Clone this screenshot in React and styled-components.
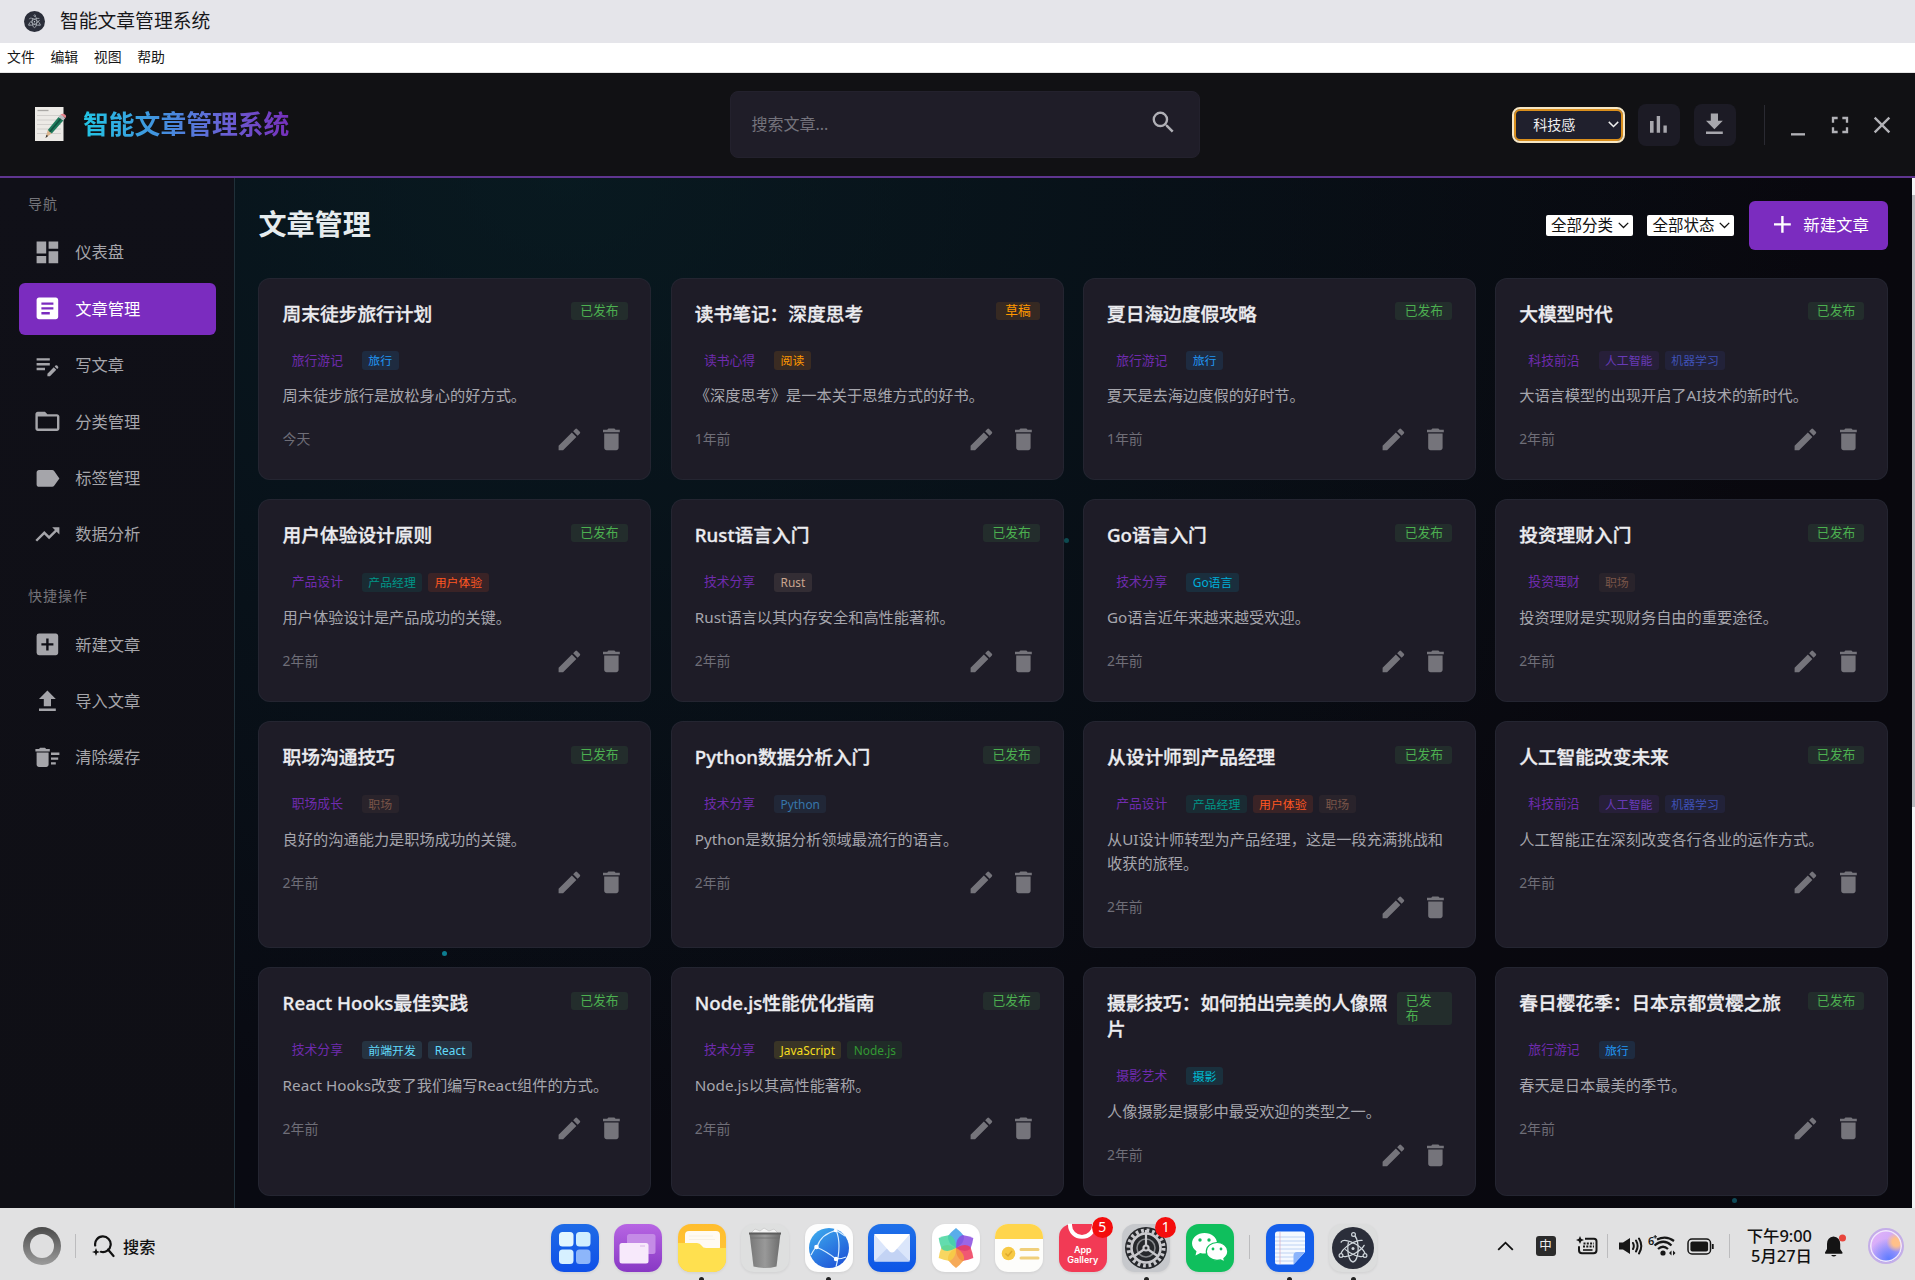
import React from "react";
import styled, { createGlobalStyle, css } from "styled-components";
import {
  MdDashboard,
  MdArticle,
  MdEditNote,
  MdFolderOpen,
  MdLabel,
  MdTrendingUp,
  MdAddBox,
  MdUpload,
  MdDeleteSweep,
  MdSearch,
  MdFileDownload,
  MdMinimize,
  MdFullscreen,
  MdClose,
  MdAdd,
  MdEdit,
  MdDelete,
} from "react-icons/md";

const GlobalStyle = createGlobalStyle`
  * { box-sizing: border-box; }
  body {
    margin: 0;
    overflow: hidden;
    font-family: "Noto Sans", "Noto Sans CJK SC", sans-serif;
    font-size: 16px;
  }
  h1, h2, h3, p { margin: 0; }
  button { font-family: inherit; border: 0; padding: 0; background: none; color: inherit; }
  svg { display: block; flex: none; }
`;

const Desktop = styled.div`
  width: 1915px;
  height: 1280px;
  display: flex;
  flex-direction: column;
  background: #0b0b10;
`;

/* ---------- window chrome ---------- */

const TitleBar = styled.div`
  flex: none;
  height: 43px;
  display: flex;
  align-items: center;
  gap: 15px;
  padding: 0 0 1px 24px;
  background: #e5e5ea;
  color: #17171a;
  font-size: 18.8px;
  span { margin-bottom: 2px; }
`;

const MenuBar = styled.div`
  flex: none;
  height: 30px;
  display: flex;
  align-items: center;
  gap: 15.6px;
  padding: 0 0 3px 7px;
  background: #fff;
  border-bottom: 1px solid #e6e6e6;
  color: #161616;
  font-size: 13.9px;
`;

const Header = styled.header`
  flex: none;
  height: 105px;
  display: grid;
  grid-template-columns: 730px 470px 1fr;
  align-items: center;
  background: #111114;
  border-bottom: 2px solid #5f3590;
`;

const Brand = styled.div`
  display: flex;
  align-items: center;
  gap: 16.5px;
  padding: 0 0 2px 32.5px;
`;

const BrandName = styled.h1`
  font-size: 25.8px;
  font-weight: 700;
  line-height: 38px;
  background: linear-gradient(90deg, #22c5e4 0%, #4a86dd 45%, #6a5fd4 70%, #7630bb 100%);
  -webkit-background-clip: text;
  background-clip: text;
  color: transparent;
`;

const SearchBox = styled.div`
  height: 67px;
  margin-bottom: 1px;
  display: flex;
  align-items: center;
  justify-content: space-between;
  padding: 0 21px 0 20.5px;
  border: 1px solid #23212d;
  border-radius: 8px;
  background: #1f1d28;
  color: #74737c;
  font-size: 16px;
  span { margin-bottom: 2px; }
  svg { color: #b0b0b6; margin-bottom: 3px; }
`;

const HeaderTools = styled.div`
  display: flex;
  align-items: center;
  justify-content: flex-end;
  padding: 0 19px 0 0;
`;

const ThemeSelect = styled.button`
  width: 113px;
  height: 36px;
  margin-right: -1px;
  display: flex;
  align-items: center;
  justify-content: space-between;
  padding: 0 4px 0 19.5px;
  border: 2px solid #f7e7c4;
  border-radius: 8px;
  box-shadow: inset 0 0 0 2px #d98e1c;
  background: #20202d;
  color: #eeeeee;
  font-size: 14.1px;
  span { margin-bottom: 2px; }
`;

const ToolButton = styled.button`
  width: 42px;
  height: 42px;
  margin-left: 14px;
  display: grid;
  place-items: center;
  border-radius: 8px;
  background: #1c1b25;
  color: #a7a7ad;
`;

const ToolDivider = styled.i`
  width: 1px;
  height: 40px;
  margin: 0 19px 0 28px;
  background: #2a2a32;
`;

const WindowButton = styled.button`
  width: 28px;
  margin-left: ${(p) => (p.$first ? 0 : 14.2)}px;
  color: #b2b2b7;
`;

/* ---------- layout ---------- */

const Body = styled.div`
  flex: none;
  height: 1030px;
  display: flex;
  overflow: hidden;
`;

const Sidebar = styled.nav`
  flex: none;
  width: 235px;
  padding: 16px 18px 0 18.6px;
  border-right: 1px solid #203039;
  background: linear-gradient(180deg, #101018 0, #0f0f15 100%);
`;

const SectionTitle = styled.h2`
  height: 20px;
  margin: ${(p) => (p.$spaced ? "25.5px" : "0")} 0 13px;
  padding-left: 9.4px;
  font-size: 14px;
  font-weight: 400;
  line-height: 20px;
  letter-spacing: 1px;
  color: #74747a;
`;

const NavItem = styled.a`
  height: 51.8px;
  margin-bottom: 4.6px;
  display: flex;
  align-items: center;
  gap: 13.4px;
  padding: 0 0 1px 14.4px;
  border-radius: 6px;
  font-size: 16.3px;
  color: #a5a5aa;
  span { margin-bottom: 2px; }
  ${(p) =>
    p.$active &&
    css`
      background: #7b2cbf;
      color: #fff;
    `}
`;

const Main = styled.main`
  position: relative;
  flex: 1;
  padding: 23px 24px 0 23.4px;
  background:
    radial-gradient(1250px 950px at 330px 0px, rgba(8, 36, 42, 0.6) 0%, rgba(6, 32, 40, 0.36) 45%, rgba(6, 20, 30, 0) 100%),
    linear-gradient(90deg, #090a12, #09080e);
`;

const ScrollTrack = styled.div`
  flex: none;
  width: 3px;
  padding-top: 17px;
  background: #f3f3f5;
`;

const ScrollThumb = styled.div`
  height: 612px;
  background: #bcbcc0;
`;

const Particle = styled.i`
  position: absolute;
  left: ${(p) => p.$x}px;
  top: ${(p) => p.$y}px;
  width: 5px;
  height: 5px;
  border-radius: 50%;
  background: ${(p) => p.$color};
`;

const PageHead = styled.div`
  height: 48.5px;
  margin-bottom: 28.2px;
  display: flex;
  align-items: center;
`;

const PageTitle = styled.h2`
  flex: 1;
  margin-bottom: 2.5px;
  font-size: 28.1px;
  font-weight: 700;
  line-height: 40px;
  color: #e6ecee;
`;

const FilterSelect = styled.button`
  width: 87px;
  height: 21px;
  margin-right: 14.5px;
  display: flex;
  align-items: center;
  justify-content: space-between;
  padding: 0 4px 1px 5.5px;
  border-radius: 2px;
  background: #fff;
  color: #111;
  font-size: 15.5px;
  line-height: 20px;
  svg { margin-top: 2px; }
`;

const NewButton = styled.button`
  width: 139.5px;
  height: 48.5px;
  display: flex;
  align-items: center;
  gap: 7px;
  padding: 0 0 1px 19px;
  border-radius: 6px;
  background: #7b2cbf;
  color: #fff;
  font-size: 16.4px;
  span { margin-bottom: 2px; }
`;

const CardGrid = styled.section`
  display: grid;
  grid-template-columns: repeat(4, 1fr);
  gap: 19.2px;
`;

const Card = styled.article`
  padding: 22px 22.6px 23.6px 23.2px;
  border: 1px solid rgba(60, 75, 90, 0.2);
  border-radius: 12px;
  background: #1e1c27;
`;

const CardHead = styled.div`
  display: flex;
  align-items: flex-start;
  justify-content: space-between;
  margin-bottom: 24.2px;
`;

const CardTitle = styled.h3`
  font-size: 18.72px;
  font-weight: 500;
  line-height: 26.2px;
  color: #ececf0;
  -webkit-text-stroke: 0.3px #ececf0;
`;

const Status = styled.span`
  margin-top: 1.5px;
  padding: 1px 9.2px 2px;
  border-radius: 3px;
  font-size: 12.8px;
  line-height: 15px;
  color: ${(p) => (p.$draft ? "#ff9800" : "#4caf50")};
  background: ${(p) => (p.$draft ? "rgba(255,152,0,.11)" : "rgba(76,175,80,.12)")};
`;

const TagRow = styled.div`
  display: flex;
  align-items: center;
  height: 18.7px;
  gap: 6px;
  margin-bottom: 13.6px;
`;

const Category = styled.span`
  margin: 0 3.4px 1.6px 0;
  padding: 0 9.6px 0 9.2px;
  font-size: 12.8px;
  line-height: 18px;
  color: #6f2bae;
`;

const Tag = styled.span`
  height: 18.7px;
  padding: 0 6.4px;
  border-radius: 3px;
  font-size: 11.9px;
  line-height: 18px;
  color: ${(p) => p.$color};
  background: ${(p) => p.$color}20;
`;

const Summary = styled.p`
  margin-bottom: 15.2px;
  font-size: 15.22px;
  line-height: 24.3px;
  color: #a6a6ad;
`;

const CardFoot = styled.div`
  height: 32.8px;
  display: flex;
  align-items: center;
  justify-content: space-between;
  font-size: 13.9px;
  color: #6f6e78;
  time { margin-bottom: 2px; }
`;

const CardActions = styled.div`
  display: flex;
  gap: 9.6px;
  color: #75747b;
`;

const IconButton = styled.button`
  width: 32.8px;
  height: 32.8px;
  display: grid;
  place-items: center;
`;

/* ---------- taskbar ---------- */

const Taskbar = styled.footer`
  flex: none;
  height: 72px;
  display: grid;
  grid-template-columns: 550.8px 826px 1fr;
  align-items: stretch;
  background: #e1e1e2;
  color: #111;
`;

const TaskLeft = styled.div`
  display: flex;
  align-items: center;
  padding: 4px 0 0 23px;
  font-size: 16.2px;
  font-weight: 500;
`;

const Launcher = styled.div`
  width: 38px;
  height: 38px;
  border-radius: 50%;
  border: 7px solid transparent;
  background:
    linear-gradient(#dfdfe0, #dfdfe0) padding-box,
    linear-gradient(180deg, #4a4a4a, #9c9c9c) border-box;
`;

const TaskSearch = styled.div`
  display: flex;
  align-items: center;
  gap: 8px;
`;

const Separator = styled.i`
  flex: none;
  width: 1px;
  height: 24px;
  margin: ${(p) => p.$m};
  background: #bcbcbe;
`;

const Dock = styled.div`
  display: flex;
  gap: 15.5px;
  padding-top: 15.7px;
`;

const DockSlot = styled.div`
  position: relative;
  width: 48px;
  height: 48px;
`;

const Tile = styled.div`
  width: 48px;
  height: 48px;
  overflow: hidden;
  border-radius: 13px;
  background: ${(p) => p.$bg};
  box-shadow: 0 1px 3px rgba(0, 0, 0, 0.08);
`;

const Badge = styled.b`
  position: absolute;
  top: -7px;
  right: -6px;
  width: 21px;
  height: 21px;
  border-radius: 50%;
  background: #f40d0d;
  color: #fff;
  font-size: 14px;
  font-weight: 400;
  line-height: 20px;
  text-align: center;
`;

const RunningDot = styled.i`
  position: absolute;
  left: 21.5px;
  top: 53px;
  width: 5px;
  height: 5px;
  border-radius: 50%;
  background: #222;
`;

const StoreTile = styled.div`
  padding-top: 21px;
  font-family: Inter, "Noto Sans", sans-serif;
  font-size: 9px;
  font-weight: 600;
  line-height: 10px;
  text-align: center;
  color: #fff;
`;

const StoreHandle = styled.i`
  position: absolute;
  left: 9px;
  top: -13px;
  width: 28px;
  height: 28px;
  border: 4px solid #fff;
  border-radius: 50%;
  clip-path: inset(13px 0 0 0);
`;

const Tray = styled.div`
  display: flex;
  align-items: center;
  justify-content: flex-end;
  padding: 4px 11px 0 0;
`;

const InputMode = styled.div`
  width: 20px;
  height: 20px;
  margin: 0 20px 0 22px;
  border-radius: 3px;
  background: #2b2b2b;
  color: #eee;
  font-size: 12.5px;
  line-height: 19px;
  text-align: center;
`;

const StatusIcons = styled.div`
  display: flex;
  align-items: center;
  gap: 5px;
  svg:last-child { margin-left: 6px; }
`;

const Clock = styled.div`
  margin-right: 12px;
  font-size: 16.4px;
  font-weight: 500;
  line-height: 20px;
  text-align: right;
`;

const Orb = styled.div`
  width: 36px;
  height: 36px;
  margin-left: 21px;
  border: 2px solid #c4aee8;
  border-radius: 50%;
  box-shadow: inset 0 0 0 1.5px #f1e9fb;
  background:
    radial-gradient(circle at 82% 38%, #ffc08a 0 12%, rgba(255, 190, 150, 0) 30%),
    radial-gradient(circle at 58% 90%, #5f7cff 0, rgba(100, 130, 255, 0) 60%),
    linear-gradient(135deg, #e6b4f8, #b7a0fb);
`;

/* ---------- drawings ---------- */

const ElectronLogo = ({ size, fill = "#2b2e3a", inset = 0 }) => (
  <svg width={size} height={size} viewBox="0 0 48 48">
    <circle cx="24" cy="24" r={24 - inset} fill={fill} />
    <g fill="none" stroke="#cfd6dc" strokeWidth="1.300" strokeLinecap="round">
      <ellipse cx="24" cy="24.500" rx="13.500" ry="5.200" transform="rotate(-30 24 24.500)" strokeDasharray="54 9" strokeDashoffset="-4" />
      <ellipse cx="24" cy="24.500" rx="13.500" ry="5.200" transform="rotate(30 24 24.500)" strokeDasharray="54 9" strokeDashoffset="-30" />
      <ellipse cx="24" cy="24.500" rx="13.500" ry="5.200" transform="rotate(90 24 24.500)" strokeDasharray="54 9" strokeDashoffset="-30" />
    </g>
    <g fill={fill} stroke="#cfd6dc" strokeWidth="1.200">
      <circle cx="24.500" cy="10.500" r="1.900" />
      <circle cx="12" cy="31.500" r="1.900" />
      <circle cx="36" cy="31.500" r="1.900" />
    </g>
    <circle cx="24" cy="24.500" r="1.500" fill="#cfd6dc" />
  </svg>
);

const MemoLogo = () => (
  <svg width="34" height="38" viewBox="0 0 34 38">
    <path d="M2 2h28.500v34H2z" fill="#eceae6" />
    <path d="M4.500 5.500h11" stroke="#aaa8a5" strokeWidth="1.300" />
    <path d="M4 10.500h24M4 15h24M4 19.500h24M4 24h24M4 28.500h24" stroke="#cfcdca" strokeWidth=".9" />
    <path d="M12.500 33l2.300-8 4 3.300z" fill="#d9b48c" />
    <path d="M12.500 33l1-3.300 1.600 1.300z" fill="#333" />
    <path d="M14.800 25L25.500 12l4.800 3.500-11.500 12.900z" fill="#1f7a5c" />
    <path d="M16.800 26.700L28 13.600" stroke="#115140" strokeWidth="1.600" />
    <path d="M25.500 12l2-2.400 4.900 3.500-2.100 2.400z" fill="#b9bcc0" />
    <path d="M27.500 9.600q2.400-1.800 4.500-.1 2 1.500.4 3.600z" fill="#e5838c" />
  </svg>
);

const BarsIcon = ({ size }) => (
  <svg width={size} height={size} viewBox="0 0 24 24" fill="currentColor">
    <path d="M5 9.200h3V19H5zM10.600 5h2.800v14h-2.800zM16.200 13H19v6h-2.800z" />
  </svg>
);

const Chevron = ({ w, up, weight = 1.6 }) => (
  <svg width={w} height={w * 0.6} viewBox="0 0 10 6" fill="none" stroke="currentColor" strokeWidth={weight}>
    <path d={up ? "M.7 5.200L5 1l4.300 4.200" : "M.7 .8L5 5l4.300-4.200"} />
  </svg>
);

const TaskSearchIcon = () => (
  <svg width="23" height="24" viewBox="0 0 23 24" fill="none" stroke="#111" strokeWidth="2.200">
    <path d="M3.200 11.500A7.800 7.800 0 1 1 9 17.800M16 15.500l5.500 6.500" strokeLinecap="round" />
    <path d="M4 14l1.100 2.900L8 18l-2.900 1.100L4 22l-1.100-2.900L0 18l2.900-1.100z" fill="#111" stroke="none" />
  </svg>
);

const AppsArt = () => (
  <svg width="48" height="48" viewBox="0 0 48 48">
    <rect x="8" y="8" width="14.500" height="14.500" rx="3.500" fill="#e3f6ff" />
    <rect x="25" y="8" width="14.500" height="14.500" rx="3.500" fill="#cfeeff" />
    <rect x="8" y="25.500" width="14.500" height="14.500" rx="3.500" fill="#d6f0ff" />
    <rect x="25" y="25.500" width="14.500" height="14.500" rx="3.500" fill="#8db6fa" />
  </svg>
);

const WindowsArt = () => (
  <svg width="48" height="48" viewBox="0 0 48 48">
    <rect x="13" y="10" width="28.500" height="20" rx="2.500" fill="#c48be6" />
    <rect x="5.500" y="19" width="29" height="20.500" rx="2.500" fill="#f7e9fb" />
    <path d="M26 22h5" stroke="#d9b3e8" />
  </svg>
);

const FilesArt = () => (
  <svg width="48" height="48" viewBox="0 0 48 48">
    <rect x="7" y="7" width="35" height="20" rx="4" fill="#fffaf2" />
    <path d="M11 12h24M11 15.500h26" stroke="#f6f0e8" />
    <path d="M0 19h19q3 0 4.500 2.500T28 24h20v24H0z" fill="#ffe04f" />
  </svg>
);

const TrashArt = () => (
  <svg width="48" height="48" viewBox="0 0 48 48">
    <defs>
      <linearGradient id="bin" x1="0" x2="1">
        <stop offset="0" stopColor="#777" />
        <stop offset=".5" stopColor="#999" />
        <stop offset="1" stopColor="#6c6c6c" />
      </linearGradient>
    </defs>
    <path d="M10 9l4-4 5 2 4-3 5 3 5-2 5 5z" fill="#f4f4f4" stroke="#c9c9c9" strokeWidth=".8" />
    <path d="M8.500 9.500h31l-4 33q-11.500 3-23 0z" fill="url(#bin)" />
    <path d="M8 9.500h32" stroke="#5d5d5d" strokeWidth="1.800" />
    <path d="M10 14h28" stroke="#707070" strokeWidth=".8" />
  </svg>
);

const BrowserArt = () => (
  <svg width="48" height="48" viewBox="0 0 48 48">
    <defs>
      <linearGradient id="globe" x1="0" y1="0" x2=".7" y2="1">
        <stop offset="0" stopColor="#3fb0ee" />
        <stop offset="1" stopColor="#1f56d8" />
      </linearGradient>
    </defs>
    <circle cx="24" cy="24" r="20" fill="url(#globe)" />
    <g fill="none" stroke="#d9efff" strokeWidth="1.200">
      <path d="M12 23Q16 10 31 6.500M11 23q10 4 20 12 6 0 10-2M31 6q6 14 0 37M11 23q-3 4-5 8M31 6q6 4 9 6" />
    </g>
    <circle cx="11.500" cy="23" r="2.300" fill="#fff" />
    <circle cx="31" cy="35" r="2.200" fill="#fff" />
    <circle cx="30.500" cy="6.500" r="1.800" fill="#fff" />
  </svg>
);

const MailArt = () => (
  <svg width="48" height="48" viewBox="0 0 48 48">
    <rect x="6" y="10" width="36" height="27.500" rx="2" fill="#dbe6fb" />
    <path d="M6 37.500l14-14h8l14 14z" fill="#c3d3f4" />
    <path d="M6 10h36L26.500 27.500q-2.500 2-5 0z" fill="#fff" />
  </svg>
);

const GalleryArt = () => (
  <svg width="48" height="48" viewBox="0 0 48 48">
    {["#3d9fe6", "#8a4be0", "#ee3b5b", "#f59b3c", "#f7cf45", "#48d6a0"].map((c, i) => (
      <path
        key={c}
        d="M24 24q-9-5-8-12 4-5 8-8 4 3 8 8 1 7-8 12z"
        fill={c}
        opacity=".85"
        transform={`rotate(${i * 60} 24 24)`}
      />
    ))}
  </svg>
);

const NotesArt = () => (
  <svg width="48" height="48" viewBox="0 0 48 48">
    <rect width="48" height="15" fill="#ffd54c" />
    <circle cx="13.500" cy="29.500" r="6.800" fill="#f7c945" />
    <path d="M10.500 29.500l2.500 2.500 4-5" stroke="#dfa92d" strokeWidth="1.500" fill="none" />
    <path d="M26 25.500h17M26 34h17" stroke="#f0cf7a" strokeWidth="3" strokeLinecap="round" />
  </svg>
);

const SettingsArt = () => (
  <svg width="48" height="48" viewBox="0 0 48 48">
    <circle cx="24" cy="24" r="21" fill="#26282c" />
    <circle cx="24" cy="24" r="17.500" fill="none" stroke="#c9c9cd" strokeWidth="4" strokeDasharray="2.750 2.750" />
    <circle cx="24" cy="24" r="14.500" fill="none" stroke="#c9c9cd" strokeWidth="2.600" />
    <circle cx="24" cy="24" r="9" fill="none" stroke="#85878b" strokeWidth="1.600" />
    <path d="M24 24V6M24 24l-11.500 8M24 24l11.500 8" stroke="#c9c9cd" strokeWidth="2.200" />
    <circle cx="24" cy="24" r="3.600" fill="#c9c9cd" />
    <circle cx="24" cy="24" r="1.500" fill="#26282c" />
  </svg>
);

const ChatArt = () => (
  <svg width="48" height="48" viewBox="0 0 48 48">
    <path d="M18.500 9C11.500 9 6 13.600 6 19.300c0 3.200 1.700 6 4.500 7.900l-1 4.300 4.800-2.500q2 .6 4.200.6c7 0 12.500-4.600 12.500-10.300S25.500 9 18.500 9z" fill="#fff" />
    <circle cx="14" cy="16" r="1.700" fill="#0fbf5d" />
    <circle cx="23" cy="16" r="1.700" fill="#0fbf5d" />
    <path d="M31 18.500c6 0 10.800 4 10.800 9 0 2.800-1.500 5.200-3.900 6.900l.8 3.700-4.100-2.200q-1.700.5-3.600.5c-6 0-10.700-4-10.700-8.900s4.700-9 10.700-9z" fill="#fff" stroke="#0fbf5d" strokeWidth="1.200" />
    <circle cx="27" cy="25" r="1.400" fill="#0fbf5d" />
    <circle cx="35" cy="25" r="1.400" fill="#0fbf5d" />
  </svg>
);

const DocArt = () => (
  <svg width="48" height="48" viewBox="0 0 48 48">
    <path d="M9 10q0-2.500 2.500-2.500h25Q39 7.500 39 10v18L27.500 40.500h-16Q9 40.500 9 38z" fill="#f5f9ff" />
    <path d="M9 13h30M9 17h30M9 21h30M9 25h30M9 29h28M9 33h24M9 37h20" stroke="#b8cdf2" strokeWidth=".9" />
    <path d="M14 8v32" stroke="#d8a6bb" strokeWidth=".7" />
    <path d="M39 28L27.500 40.500v-9q0-3.500 3.500-3.500z" fill="#8bb4fb" />
  </svg>
);

const KeyboardIcon = () => (
  <svg width="22" height="20" viewBox="0 0 22 20" fill="none" stroke="#161616" strokeWidth="2">
    <path d="M9 2.800h9q2.500 0 2.500 2.500v9q0 3-3 3H6q-3 0-3-3v-4" />
    <path d="M7.500 7.500h10.500M7 10.500h11" strokeDasharray="2 1.300" />
    <path d="M7 14h9.500" strokeWidth="1.600" />
    <path d="M4 0l1.200 2.800L8 4 5.200 5.200 4 8 2.800 5.200 0 4l2.800-1.200z" fill="#161616" stroke="none" />
  </svg>
);

const VolumeIcon = () => (
  <svg width="25" height="20" viewBox="0 0 25 20" fill="none" stroke="#161616" strokeWidth="2" strokeLinecap="round">
    <path d="M1 6.500h4L12 2v16l-7-4.500H1z" fill="#161616" stroke="none" />
    <path d="M15 7q1.600 3 0 6M18 4.500q3.200 5.500 0 11M21 2.500q4.600 7.500 0 15" />
  </svg>
);

const WifiIcon = () => (
  <svg width="28" height="22" viewBox="0 0 28 22" fill="none" stroke="#161616" strokeWidth="2.200">
    <path d="M9 4.600Q18 0 26 6M6.500 10.500Q15.500 3 23.500 10.500M10 14q5-4.500 10 0" />
    <circle cx="15" cy="18" r="2.600" fill="#161616" stroke="none" />
    <path d="M23.500 15.500v5L21 18zM25 15.500v5l2.500-2.500z" fill="#161616" stroke="none" />
    <text x="0" y="10" fontFamily="Noto Sans, sans-serif" fontSize="11" fontWeight="600" fill="#161616" stroke="none">6</text>
    <path d="M5.500 1.800h3.500M7.200 0v3.600" strokeWidth="1" />
  </svg>
);

const BatteryIcon = () => (
  <svg width="28" height="17" viewBox="0 0 28 17">
    <rect x="1" y="1" width="22.500" height="15" rx="4" fill="none" stroke="#161616" strokeWidth="1.500" />
    <rect x="3.400" y="3.400" width="17.700" height="10.200" rx="2" fill="#161616" />
    <path d="M25.800 6v5" stroke="#161616" strokeWidth="1.800" />
  </svg>
);

const BellIcon = () => (
  <svg width="23" height="24" viewBox="0 0 23 24">
    <path d="M9.500 2.500q6.500.5 6.700 7.500v5l2.300 3.500q.4 1.200-1 1.300H2q-1.500-.1-1-1.300L3 15v-5q.2-7 6.500-7.500zM7 21h5.500q-2.700 3-5.500 0z" fill="#141414" />
    <circle cx="18.500" cy="4" r="3.500" fill="#e8453c" />
  </svg>
);

/* ---------- data ---------- */

const NAV = [
  [MdDashboard, "仪表盘"],
  [MdArticle, "文章管理"],
  [MdEditNote, "写文章"],
  [MdFolderOpen, "分类管理"],
  [MdLabel, "标签管理"],
  [MdTrendingUp, "数据分析"],
];

const SHORTCUTS = [
  [MdAddBox, "新建文章"],
  [MdUpload, "导入文章"],
  [MdDeleteSweep, "清除缓存"],
];

const C = {
  旅行: "#2196f3",
  阅读: "#ff9800",
  人工智能: "#673ab7",
  机器学习: "#3f51b5",
  产品经理: "#009688",
  用户体验: "#ff5722",
  Rust: "#c9a58f",
  Go语言: "#00add8",
  职场: "#795548",
  Python: "#3776ab",
  前端开发: "#61dafb",
  React: "#61dafb",
  JavaScript: "#f7df1e",
  "Node.js": "#339933",
  摄影: "#00bcd4",
};

const ARTICLES = [
  ["周末徒步旅行计划", "旅行游记", ["旅行"], "周末徒步旅行是放松身心的好方式。", "今天"],
  ["读书笔记：深度思考", "读书心得", ["阅读"], "《深度思考》是一本关于思维方式的好书。", "1年前", true],
  ["夏日海边度假攻略", "旅行游记", ["旅行"], "夏天是去海边度假的好时节。", "1年前"],
  ["大模型时代", "科技前沿", ["人工智能", "机器学习"], "大语言模型的出现开启了AI技术的新时代。", "2年前"],
  ["用户体验设计原则", "产品设计", ["产品经理", "用户体验"], "用户体验设计是产品成功的关键。", "2年前"],
  ["Rust语言入门", "技术分享", ["Rust"], "Rust语言以其内存安全和高性能著称。", "2年前"],
  ["Go语言入门", "技术分享", ["Go语言"], "Go语言近年来越来越受欢迎。", "2年前"],
  ["投资理财入门", "投资理财", ["职场"], "投资理财是实现财务自由的重要途径。", "2年前"],
  ["职场沟通技巧", "职场成长", ["职场"], "良好的沟通能力是职场成功的关键。", "2年前"],
  ["Python数据分析入门", "技术分享", ["Python"], "Python是数据分析领域最流行的语言。", "2年前"],
  ["从设计师到产品经理", "产品设计", ["产品经理", "用户体验", "职场"], "从UI设计师转型为产品经理，这是一段充满挑战和收获的旅程。", "2年前"],
  ["人工智能改变未来", "科技前沿", ["人工智能", "机器学习"], "人工智能正在深刻改变各行各业的运作方式。", "2年前"],
  ["React Hooks最佳实践", "技术分享", ["前端开发", "React"], "React Hooks改变了我们编写React组件的方式。", "2年前"],
  ["Node.js性能优化指南", "技术分享", ["JavaScript", "Node.js"], "Node.js以其高性能著称。", "2年前"],
  ["摄影技巧：如何拍出完美的人像照片", "摄影艺术", ["摄影"], "人像摄影是摄影中最受欢迎的类型之一。", "2年前"],
  ["春日樱花季：日本京都赏樱之旅", "旅行游记", ["旅行"], "春天是日本最美的季节。", "2年前"],
];

const DOCK = [
  { bg: "linear-gradient(#1f6be6,#0f50e8)", art: <AppsArt /> },
  { bg: "linear-gradient(#b765e3,#8838c4)", art: <WindowsArt /> },
  { bg: "linear-gradient(#ffbd2e,#ffc93c)", art: <FilesArt />, running: true },
  { bg: "#dedfdf", art: <TrashArt /> },
  { bg: "#fdfdfd", art: <BrowserArt />, running: true },
  { bg: "linear-gradient(#1f70e8,#0d55e6)", art: <MailArt /> },
  { bg: "#ffffff", art: <GalleryArt /> },
  { bg: "#fdfdfb", art: <NotesArt /> },
  { bg: "#f23a55", store: true, badge: "5" },
  { bg: "#c6c8cc", art: <SettingsArt />, badge: "1", running: true },
  { bg: "#0fbf5d", art: <ChatArt /> },
];

const PINNED = [
  { bg: "#145eea", art: <DocArt />, running: true },
  { bg: "#dcdddd", art: <ElectronLogo size={48} inset={3} />, running: true },
];

/* ---------- components ---------- */

const ArticleCard = ({ data: [title, category, tags, summary, date, draft] }) => (
  <Card>
    <CardHead>
      <CardTitle>{title}</CardTitle>
      <Status $draft={draft}>{draft ? "草稿" : "已发布"}</Status>
    </CardHead>
    <TagRow>
      <Category>{category}</Category>
      {tags.map((t) => (
        <Tag key={t} $color={C[t]}>{t}</Tag>
      ))}
    </TagRow>
    <Summary>{summary}</Summary>
    <CardFoot>
      <time>{date}</time>
      <CardActions>
        <IconButton><MdEdit size={28.8} /></IconButton>
        <IconButton><MdDelete size={28.8} /></IconButton>
      </CardActions>
    </CardFoot>
  </Card>
);

const DockIcon = ({ item }) => (
  <DockSlot>
    <Tile $bg={item.bg}>
      {item.store ? (
        <StoreTile>
          <StoreHandle />
          App
          <br />
          Gallery
        </StoreTile>
      ) : (
        item.art
      )}
    </Tile>
    {item.badge && <Badge>{item.badge}</Badge>}
    {item.running && <RunningDot />}
  </DockSlot>
);

export default function App() {
  return (
    <Desktop>
      <GlobalStyle />
      <TitleBar>
        <ElectronLogo size={21} />
        <span>智能文章管理系统</span>
      </TitleBar>
      <MenuBar>
        <span>文件</span>
        <span>编辑</span>
        <span>视图</span>
        <span>帮助</span>
      </MenuBar>
      <Header>
        <Brand>
          <MemoLogo />
          <BrandName>智能文章管理系统</BrandName>
        </Brand>
        <SearchBox>
          <span>搜索文章...</span>
          <MdSearch size={28.8} />
        </SearchBox>
        <HeaderTools>
          <ThemeSelect>
            <span>科技感</span>
            <Chevron w={11} weight={1.3} />
          </ThemeSelect>
          <ToolButton><BarsIcon size={28.8} /></ToolButton>
          <ToolButton><MdFileDownload size={28.8} /></ToolButton>
          <ToolDivider />
          <WindowButton $first><MdMinimize size={28} /></WindowButton>
          <WindowButton><MdFullscreen size={28} /></WindowButton>
          <WindowButton><MdClose size={28} /></WindowButton>
        </HeaderTools>
      </Header>
      <Body>
        <Sidebar>
          <SectionTitle>导航</SectionTitle>
          {NAV.map(([Icon, label], i) => (
            <NavItem key={label} $active={i === 1}>
              <Icon size={28.8} />
              <span>{label}</span>
            </NavItem>
          ))}
          <SectionTitle $spaced>快捷操作</SectionTitle>
          {SHORTCUTS.map(([Icon, label]) => (
            <NavItem key={label}>
              <Icon size={28.8} />
              <span>{label}</span>
            </NavItem>
          ))}
        </Sidebar>
        <Main>
          <PageHead>
            <PageTitle>文章管理</PageTitle>
            <FilterSelect>
              全部分类
              <Chevron w={11} weight={1.2} />
            </FilterSelect>
            <FilterSelect>
              全部状态
              <Chevron w={11} weight={1.2} />
            </FilterSelect>
            <NewButton>
              <MdAdd size={28.8} />
              <span>新建文章</span>
            </NewButton>
          </PageHead>
          <CardGrid>
            {ARTICLES.map((a) => (
              <ArticleCard key={a[0]} data={a} />
            ))}
          </CardGrid>
          <Particle $x={829} $y={360} $color="#0d4a50" />
          <Particle $x={207} $y={773} $color="#0d7d90" />
          <Particle $x={1497} $y={1020} $color="#0f4a58" />
        </Main>
        <ScrollTrack>
          <ScrollThumb />
        </ScrollTrack>
      </Body>
      <Taskbar>
        <TaskLeft>
          <Launcher />
          <Separator $m="0 16px 0 14px" />
          <TaskSearch>
            <TaskSearchIcon />
            搜索
          </TaskSearch>
        </TaskLeft>
        <Dock>
          {DOCK.map((d, i) => (
            <DockIcon key={i} item={d} />
          ))}
          <Separator $m="11px 0 0" />
          {PINNED.map((d, i) => (
            <DockIcon key={i} item={d} />
          ))}
        </Dock>
        <Tray>
          <Chevron w={17} up weight={1.1} />
          <InputMode>中</InputMode>
          <KeyboardIcon />
          <Separator $m="0 10px 0 9px" />
          <StatusIcons>
            <VolumeIcon />
            <WifiIcon />
            <BatteryIcon />
          </StatusIcons>
          <Separator $m="0 17px 0 14px" />
          <Clock>
            下午9:00
            <br />
            5月27日
          </Clock>
          <BellIcon />
          <Orb />
        </Tray>
      </Taskbar>
    </Desktop>
  );
}
